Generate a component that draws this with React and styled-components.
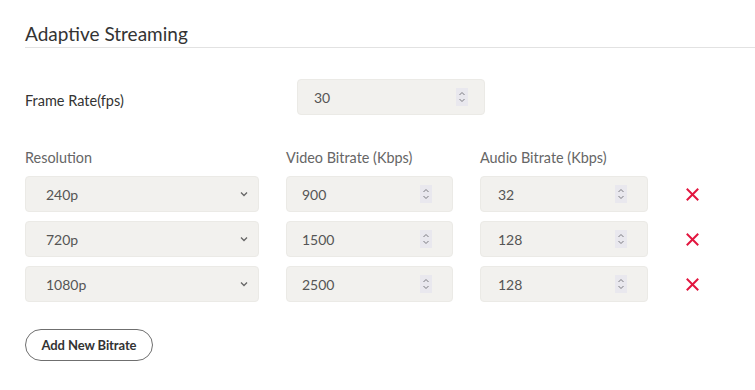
import React, { useState } from "react";
import styled, { createGlobalStyle } from "styled-components";

const GlobalStyle = createGlobalStyle`
  html, body {
    margin: 0;
    padding: 0;
    background: #fff;
    font-family: Lato, "Open Sans", sans-serif;
  }
  * { box-sizing: border-box; }
`;

const Page = styled.div`
  padding: 22px 0 0 25px;
  width: 755px;
`;

const Title = styled.h2`
  margin: 0;
  font-size: 19px;
  line-height: 24px;
  font-weight: 400;
  color: #333;
  padding-bottom: 1px;
  border-bottom: 1px solid #e2e2e2;
`;

const FrameRow = styled.div`
  display: flex;
  align-items: flex-start;
  margin-top: 31px;
`;

const FrameLabel = styled.label`
  width: 272px;
  font-size: 14.5px;
  line-height: 20px;
  color: #333;
  padding-top: 12px;
`;

const Grid = styled.div`
  display: grid;
  grid-template-columns: 234px 167px 168px 34px;
  column-gap: 27px;
  row-gap: 9px;
  margin-top: 33px;
  align-items: center;
`;

const ColLabel = styled.div`
  font-size: 14.4px;
  line-height: 20px;
  color: #666;
  margin-bottom: -1px;
`;

const Field = styled.div`
  display: flex;
  align-items: center;
  width: ${(p) => p.width || "100%"};
  height: 36px;
  background: #f2f1ee;
  border: 1px solid #ebeae6;
  border-radius: 4px;
  padding: 0 ${(p) => p.padRight || 20}px 0 ${(p) => p.padLeft || 15}px;
`;

const NumberInput = styled.input`
  flex: 1;
  min-width: 0;
  border: none;
  outline: none;
  background: transparent;
  font-family: inherit;
  font-size: 14px;
  color: #555;
  padding: 0;
  -moz-appearance: textfield;
  &::-webkit-outer-spin-button,
  &::-webkit-inner-spin-button {
    -webkit-appearance: none;
    margin: 0;
  }
`;

const Spinner = styled.span`
  display: flex;
  align-items: center;
  justify-content: center;
  width: 12px;
  height: 18px;
  background: #e9e8ee;
`;

const Select = styled.select`
  flex: 1;
  appearance: none;
  border: none;
  outline: none;
  background: transparent;
  font-family: inherit;
  font-size: 14px;
  color: #555;
  padding: 0;
`;

const RemoveButton = styled.button`
  border: none;
  background: transparent;
  padding: 0;
  width: 34px;
  height: 36px;
  display: flex;
  align-items: center;
  justify-content: center;
  cursor: pointer;
`;

const AddButton = styled.button`
  margin-top: 27px;
  height: 32px;
  width: 128px;
  border: 1px solid #6f6f6f;
  border-radius: 16px;
  background: #fff;
  font-family: inherit;
  font-size: 13px;
  font-weight: 700;
  color: #333;
  letter-spacing: -0.1px;
  cursor: pointer;
`;

const SpinIcon = () => (
  <Spinner>
    <svg width="8" height="14" viewBox="0 0 8 14" fill="none" stroke="#7a7a80" strokeWidth="1">
      <path d="M1.5 5 L4 2.5 L6.5 5" />
      <path d="M1.5 9 L4 11.5 L6.5 9" />
    </svg>
  </Spinner>
);

const NumberField = ({ value, width, padLeft, padRight }) => (
  <Field width={width} padLeft={padLeft} padRight={padRight}>
    <NumberInput type="number" defaultValue={value} />
    <SpinIcon />
  </Field>
);

const Chevron = () => (
  <svg width="8" height="6" viewBox="0 0 8 6" fill="none" stroke="#666" strokeWidth="1.3">
    <path d="M1 1.5 L4 4.5 L7 1.5" />
  </svg>
);

const Cross = () => (
  <svg width="13" height="13" viewBox="0 0 13 13" stroke="#e2163f" strokeWidth="2" strokeLinecap="square">
    <path d="M1.5 1.5 L11.5 11.5 M11.5 1.5 L1.5 11.5" />
  </svg>
);

const initialRows = [
  { res: "240p", video: 900, audio: 32 },
  { res: "720p", video: 1500, audio: 128 },
  { res: "1080p", video: 2500, audio: 128 },
];

export default function App() {
  const [rows, setRows] = useState(initialRows);

  return (
    <Page>
      <GlobalStyle />
      <Title>Adaptive Streaming</Title>
      <FrameRow>
        <FrameLabel>Frame Rate(fps)</FrameLabel>
        <NumberField value={30} width="188px" padLeft={16} padRight={16} />
      </FrameRow>
      <Grid>
        <ColLabel>Resolution</ColLabel>
        <ColLabel>Video Bitrate (Kbps)</ColLabel>
        <ColLabel>Audio Bitrate (Kbps)</ColLabel>
        <div />
        {rows.map((row, i) => (
          <React.Fragment key={i}>
            <Field padLeft={20} padRight={10}>
              <Select defaultValue={row.res}>
                <option>240p</option>
                <option>360p</option>
                <option>480p</option>
                <option>720p</option>
                <option>1080p</option>
              </Select>
              <Chevron />
            </Field>
            <NumberField value={row.video} />
            <NumberField value={row.audio} padLeft={17} />
            <RemoveButton onClick={() => setRows(rows.filter((_, j) => j !== i))}>
              <Cross />
            </RemoveButton>
          </React.Fragment>
        ))}
      </Grid>
      <AddButton onClick={() => setRows([...rows, { res: "240p", video: 900, audio: 32 }])}>
        Add New Bitrate
      </AddButton>
    </Page>
  );
}
